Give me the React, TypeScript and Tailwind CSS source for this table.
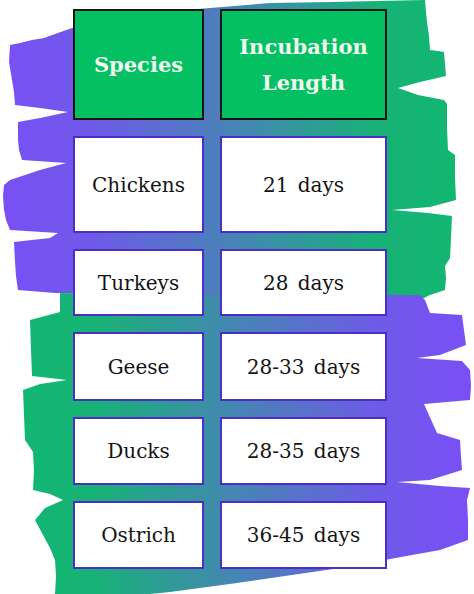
import React from 'react';

const rows = [
  { species: 'Chickens', days: '21 days', h: 'h-[97px]' },
  { species: 'Turkeys', days: '28 days', h: 'h-[67px]' },
  { species: 'Geese', days: '28-33 days', h: 'h-[69px]' },
  { species: 'Ducks', days: '28-35 days', h: 'h-[68px]' },
  { species: 'Ostrich', days: '36-45 days', h: 'h-[68px]' },
];

const topStroke =
  '10,45 20,43 32,40 44,38 55,34 72,28 140,14 210,8 270,3 330,2 425,0 426,12 427,22 429,36 430,50 438,51 444,52 445,64 446,76 420,82 398,88 418,95 444,100 447,104 447,128 448,150 455,155 455,178 456,200 430,207 392,210 428,213 452,216 451,238 450,258 445,266 446,278 445,290 430,295 420,300 240,297 55,293 18,290 16,276 15,262 14,242 50,238 58,233 10,230 6,220 4,210 3,196 4,185 10,180 40,170 66,163 22,160 19,150 18,140 18,122 40,118 68,112 40,108 15,105 14,92 12,80 9,62';

const bottomStroke =
  '60,293 240,296 420,295 425,300 430,313 462,315 464,330 466,345 440,355 417,358 462,361 470,370 471,386 470,400 424,404 437,433 460,440 461,456 462,470 430,480 397,482 440,486 470,488 467,500 468,520 468,540 440,550 340,568 237,583 170,592 150,594 55,594 56,576 55,560 50,548 35,520 45,508 63,500 50,494 33,490 34,470 33,452 25,440 24,415 23,390 40,384 67,380 32,376 31,350 30,320 45,316 60,312';

function Background() {
  return (
    <svg
      className="absolute inset-0"
      width="474"
      height="594"
      viewBox="0 0 474 594"
    >
      <defs>
        <linearGradient id="gTop" x1="0" y1="0" x2="474" y2="0" gradientUnits="userSpaceOnUse">
          <stop offset="0" stopColor="#7a4ff6" />
          <stop offset="0.2" stopColor="#6f5ae8" />
          <stop offset="0.5" stopColor="#4685b4" />
          <stop offset="0.8" stopColor="#17b276" />
          <stop offset="1" stopColor="#10b870" />
        </linearGradient>
        <linearGradient id="gBottom" x1="0" y1="0" x2="474" y2="0" gradientUnits="userSpaceOnUse">
          <stop offset="0" stopColor="#10b870" />
          <stop offset="0.2" stopColor="#17b276" />
          <stop offset="0.5" stopColor="#4685b4" />
          <stop offset="0.8" stopColor="#6f5ae8" />
          <stop offset="1" stopColor="#7a4ff6" />
        </linearGradient>
      </defs>
      <polygon points={topStroke} fill="url(#gTop)" />
      <polygon points={bottomStroke} fill="url(#gBottom)" />
    </svg>
  );
}

export default function App() {
  return (
    <div className="relative w-[474px] h-[594px] overflow-hidden bg-white">
      <Background />
      <div
        className="relative flex flex-col gap-[16px] pt-[9px] pl-[73px]"
        style={{ fontFamily: '"DejaVu Serif", "Liberation Serif", serif' }}
      >
        <div className="flex gap-[16px] h-[111px]">
          <div className="w-[131px] flex items-center justify-center bg-[#05bf63] border-2 border-[#151515] text-[#eef8ee] font-bold text-[21px]">
            Species
          </div>
          <div className="w-[167px] flex items-center justify-center text-center bg-[#05bf63] border-2 border-[#151515] text-[#eef8ee] font-bold text-[21px] leading-[36px]">
            Incubation
            <br />
            Length
          </div>
        </div>
        {rows.map((r) => (
          <div key={r.species} className={`flex gap-[16px] ${r.h}`}>
            <div className="w-[131px] flex items-center justify-center bg-white border-2 border-[#4b2fc4] text-[#141414] text-[20px]">
              {r.species}
            </div>
            <div className="w-[167px] flex items-center justify-center bg-white border-2 border-[#4b2fc4] text-[#141414] text-[20px] [word-spacing:3px]">
              {r.days}
            </div>
          </div>
        ))}
      </div>
    </div>
  );
}
